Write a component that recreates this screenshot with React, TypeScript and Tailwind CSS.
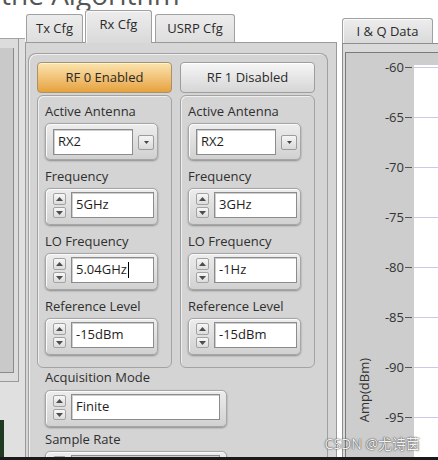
import type { ReactNode } from 'react';

type Cluster = {
  button: string;
  enabled: boolean;
  antenna: string;
  freq: string;
  lo: string;
  ref: string;
  caret?: boolean;
};

const clusters: Cluster[] = [
  { button: 'RF 0 Enabled', enabled: true, antenna: 'RX2', freq: '5GHz', lo: '5.04GHz', ref: '-15dBm', caret: true },
  { button: 'RF 1 Disabled', enabled: false, antenna: 'RX2', freq: '3GHz', lo: '-1Hz', ref: '-15dBm' },
];

const ticks = ['-60', '-65', '-70', '-75', '-80', '-85', '-90', '-95'];

function Arrow({ dir }: { dir: 'up' | 'down' }) {
  return (
    <svg width="7" height="4" viewBox="0 0 7 4" className="text-[#4d4d4d]">
      {dir === 'up' ? (
        <path d="M0 4L3.5 0L7 4Z" fill="currentColor" />
      ) : (
        <path d="M0 0L3.5 4L7 0Z" fill="currentColor" />
      )}
    </svg>
  );
}

function SpinButtons() {
  return (
    <div className="flex flex-col gap-[2px] pt-[1px]">
      <div className="w-[13px] h-[12px] rounded-[2px] border border-[#a3a3a3] bg-linear-to-b from-[#f7f7f7] to-[#dcdcdc] flex items-center justify-center">
        <Arrow dir="up" />
      </div>
      <div className="w-[13px] h-[11px] rounded-[2px] border border-[#a3a3a3] bg-linear-to-b from-[#f7f7f7] to-[#dcdcdc] flex items-center justify-center">
        <Arrow dir="down" />
      </div>
    </div>
  );
}

function Frame({ className, children }: { className: string; children: ReactNode }) {
  return (
    <div
      className={`flex items-start h-[37px] rounded-[5px] border border-[#a6a6a6] bg-linear-to-b from-[#ededed] to-[#d1d1d1]
                  shadow-[0_1px_2px_rgba(0,0,0,0.35),inset_1px_1px_0_#fafafa] pl-[7px] ${className}`}
    >
      {children}
    </div>
  );
}

function Field({ className, value, caret }: { className: string; value: string; caret?: boolean }) {
  return (
    <div
      className={`h-[26px] bg-white border border-[#8c8c8c] shadow-[inset_1px_1px_0_#cfcfcf]
                  flex items-center pl-[4px] text-[13px] text-[#1e1e1e] ${className}`}
    >
      {value}
      {caret && <span className="ml-px w-px h-[16px] bg-black" />}
    </div>
  );
}

function Numeric({ value, caret }: { value: string; caret?: boolean }) {
  return (
    <Frame className="w-[113px] pt-[3px]">
      <SpinButtons />
      <Field className="ml-[5px] w-[83px]" value={value} caret={caret} />
    </Frame>
  );
}

function Combo({ value }: { value: string }) {
  return (
    <Frame className="w-[113px] pt-[5px]">
      <Field className="w-[80px] h-[25px]" value={value} />
      <div className="ml-[5px] mt-[6px] w-[16px] h-[15px] rounded-[2px] border border-[#9c9c9c] bg-linear-to-b from-[#f5f5f5] to-[#d9d9d9] flex items-center justify-center">
        <svg width="5" height="3" viewBox="0 0 5 3">
          <path d="M0 0L2.5 3L5 0Z" fill="#444" />
        </svg>
      </div>
    </Frame>
  );
}

function Label({ children, className = '' }: { children: ReactNode; className?: string }) {
  return <div className={`h-[16px] leading-[16px] text-[13px] text-[#2f2f2f] ${className}`}>{children}</div>;
}

function RfColumn({ c }: { c: Cluster }) {
  return (
    <div className="w-[135px] flex flex-col">
      <div
        className={`h-[31px] rounded-[4px] border flex items-center justify-center text-[13px] text-[#2a2a2a]
                    ${c.enabled
                      ? 'border-[#a8926a] bg-linear-to-b from-[#fbe4ad] to-[#e6a23c] shadow-[inset_0_1px_0_#fff3d6]'
                      : 'border-[#9d9d9d] bg-linear-to-b from-[#f6f6f6] to-[#d6d6d6] shadow-[inset_0_1px_0_#ffffff]'}`}
      >
        {c.button}
      </div>
      <div className="mt-[2px] rounded-[6px] border border-[#a3a3a3] shadow-[inset_1px_1px_0_#eeeeee] pt-[7px] px-[7px] pb-[12px]">
        <Label>Active Antenna</Label>
        <div className="mt-[4px]">
          <Combo value={c.antenna} />
        </div>
        <Label className="mt-[8px]">Frequency</Label>
        <div className="mt-[4px]">
          <Numeric value={c.freq} />
        </div>
        <Label className="mt-[8px]">LO Frequency</Label>
        <div className="mt-[4px]">
          <Numeric value={c.lo} caret={c.caret} />
        </div>
        <Label className="mt-[8px]">Reference Level</Label>
        <div className="mt-[4px]">
          <Numeric value={c.ref} />
        </div>
      </div>
    </div>
  );
}

function Tab({ label, active, className }: { label: string; active?: boolean; className: string }) {
  return (
    <div
      className={`rounded-t-[3px] border border-b-0 border-[#a0a0a0] flex items-center justify-center text-[13px] text-[#2a2a2a]
                  ${active
                    ? 'h-[33px] -mb-px bg-linear-to-b from-[#ededed] to-[#d9d9d9] shadow-[inset_1px_1px_0_#fafafa] pb-[4px]'
                    : 'h-[28px] bg-linear-to-b from-[#ececec] to-[#dedede]'} ${className}`}
    >
      {label}
    </div>
  );
}

export default function App() {
  return (
    <div className="relative w-[438px] h-[460px] overflow-hidden bg-white border-b-[3px] border-[#1a1a1a] flex flex-col font-['Open_Sans','Noto_Sans',sans-serif]">
      {/* cut-off window title */}
      <div className="h-[10px] overflow-hidden shrink-0">
        <div className="-mt-[20px] ml-[1px] text-[28px] leading-none text-[#555] whitespace-nowrap">the Algorithm</div>
      </div>

      <div className="flex-1 min-h-0 flex">
        {/* left strip */}
        <div className="w-[25px] flex flex-col">
          <div className="h-[30px]" />
          <div className="flex-1 bg-[#e0e0e0] border-t border-[#a3a3a3] flex flex-col">
            <div className="h-[343px] w-[19px] border-r border-b border-[#9a9a9a] bg-[#dcdcdc] pt-[9px] pr-[4px] pb-[8px] flex">
              <div className="flex-1 bg-[#c9c9c9] border-r border-b border-[#8a8a8a]" />
            </div>
            <div className="mt-[38px] w-[4px] h-[37px] bg-[#203a22]" />
          </div>
        </div>

        {/* Rx Cfg tab control */}
        <div className="w-[312px] flex flex-col">
          <div className="h-[32px] flex items-end relative z-10">
            <Tab label="Tx Cfg" className="ml-[1px] w-[57px]" />
            <Tab label="Rx Cfg" active className="ml-[2px] w-[67px]" />
            <Tab label="USRP Cfg" className="ml-[3px] w-[80px]" />
          </div>
          <div className="flex-1 min-h-0 border border-b-0 border-[#9a9a9a] bg-[#d6d6d6] pt-[10px] pl-[2px] pr-[8px]">
            <div className="h-full rounded-t-[8px] border border-b-0 border-[#a0a0a0] bg-[#d4d4d4] shadow-[inset_1px_1px_0_#efefef] pt-[8px] px-[8px]">
              <div className="flex gap-[8px]">
                {clusters.map((c) => (
                  <RfColumn key={c.button} c={c} />
                ))}
              </div>
              <div className="px-[8px]">
                <Label className="mt-[1px]">Acquisition Mode</Label>
                <div className="mt-[5px]">
                  <Frame className="w-[182px] pt-[3px]">
                    <SpinButtons />
                    <Field className="ml-[5px] w-[149px]" value="Finite" />
                  </Frame>
                </div>
                <Label className="mt-[4px]">Sample Rate</Label>
                <div className="mt-[4px]">
                  <Frame className="w-[182px] pt-[3px]">
                    <SpinButtons />
                    <Field className="ml-[5px] w-[149px]" value="" />
                  </Frame>
                </div>
              </div>
            </div>
          </div>
        </div>

        {/* I & Q Data graph */}
        <div className="flex-1 min-w-0 flex flex-col pt-[8px] pl-[5px]">
          <Tab label="I & Q Data" active className="w-[91px] !h-[26px] !pb-0" />
          <div className="flex-1 min-h-0 border-l border-t border-[#8e8e8e] bg-[#dadada] pt-[8px] pl-[2px]">
            <div className="relative h-full border-t border-l border-[#7a7a7a] bg-[#cdcdcd] flex">
              <div className="w-[68px] shrink-0 pt-[7px] pr-[2px]">
                {ticks.map((t) => (
                  <div key={t} className="h-[50px] flex justify-end items-start">
                    <span className="text-[13px] leading-[14px] text-[#333]">{t}</span>
                    <span className="mt-[7px] ml-[1px] w-[7px] h-px bg-[#555]" />
                  </div>
                ))}
              </div>
              <div className="flex-1 mt-[12px] bg-white pt-[2px]">
                {ticks.map((t) => (
                  <div key={t} className="h-[50px] border-t border-[#c9c9ec]" />
                ))}
              </div>
              <span className="absolute left-[9px] top-[305px] text-[13px] leading-[18px] text-[#333] [writing-mode:vertical-rl] rotate-180">
                Amp(dBm)
              </span>
            </div>
          </div>
        </div>
      </div>

      {/* watermark */}
      <div className="absolute right-[18px] bottom-[5px] text-[14px] leading-[16px] text-[#f2f2f2] font-['Open_Sans','Noto_Sans_CJK_SC',sans-serif] [text-shadow:0_0_1px_#333,0_0_2px_#666]">
        CSDN @尤诗茵
      </div>
    </div>
  );
}
